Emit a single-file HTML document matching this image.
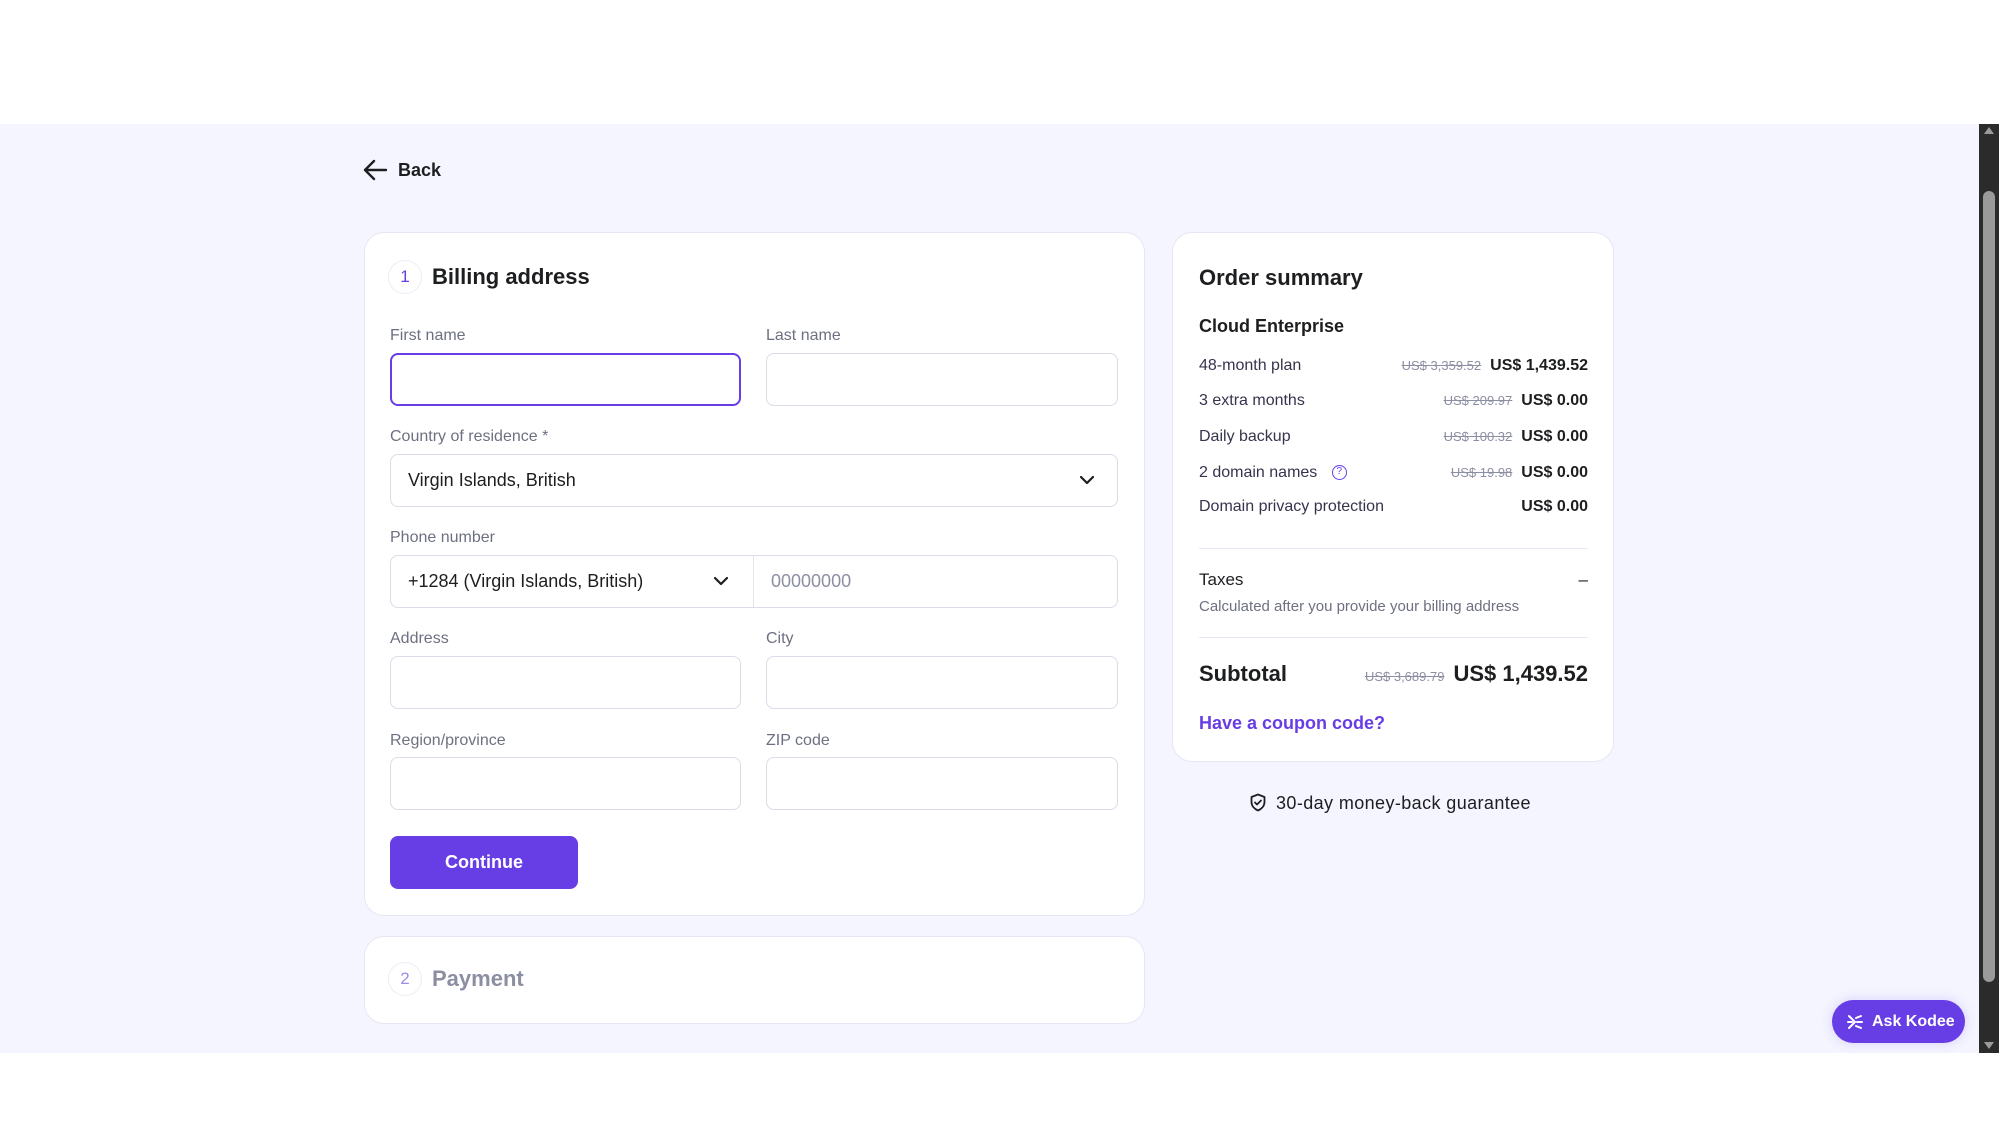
<!DOCTYPE html>
<html><head><meta charset="utf-8"><style>
*{box-sizing:border-box;margin:0;padding:0}
body{width:1999px;height:1125px;position:relative;background:#fff;font-family:"Liberation Sans",sans-serif;color:#2f1c6a;overflow:hidden}
.bg{position:absolute;left:0;top:124px;width:1979px;height:929px;background:#f4f5ff}
.sb{position:absolute;left:1979px;top:124px;width:20px;height:929px;background:#2b2b2b}
.thumb{position:absolute;left:1983px;top:191px;width:12px;height:791px;background:#9a9a9a;border-radius:6px}
.a{position:absolute}
.card{position:absolute;background:#fff;border:1px solid #e6e7f2;border-radius:20px}
.lbl{position:absolute;font-size:16px;color:#6d7081}
.inp{position:absolute;background:#fff;border:1px solid #dadce8;border-radius:8px;height:53px}
.txt{font-size:18px;color:#1d1e20}
.row{position:absolute;left:1199px;width:389px;font-size:16px;color:#36344d;display:flex;justify-content:space-between;align-items:center}
.old{color:#8c8fa3;text-decoration:line-through;font-size:13px;margin-right:9px}
.new{font-weight:bold;color:#1d1e20}
.circ{position:absolute;width:34px;height:34px;border-radius:50%;border:1px solid #ececf5;display:flex;align-items:center;justify-content:center;font-size:17px;color:#673de6}
</style></head><body>
<div class="bg"></div>
<div class="sb"></div><div class="thumb"></div>
<div class="a" style="left:1984px;top:127px;width:0;height:0;border-left:5px solid transparent;border-right:5px solid transparent;border-bottom:7px solid #9a9a9a"></div>
<div class="a" style="left:1984px;top:1042px;width:0;height:0;border-left:5px solid transparent;border-right:5px solid transparent;border-top:7px solid #9a9a9a"></div>

<svg class="a" style="left:362px;top:158px" width="26" height="24" viewBox="0 0 26 24"><path d="M24 12H3M12 3L3 12l9 9" fill="none" stroke="#1d1e20" stroke-width="2.4" stroke-linecap="round" stroke-linejoin="round"/></svg>
<div class="a" style="left:398px;top:160px;font-size:18px;font-weight:bold;color:#1d1e20">Back</div>

<div class="card" style="left:364px;top:232px;width:781px;height:684px"></div>
<div class="circ" style="left:388px;top:260px">1</div>
<div class="a" style="left:432px;top:264px;font-size:22px;font-weight:bold;color:#1d1e20">Billing address</div>

<div class="lbl" style="left:390px;top:327px">First name</div>
<div class="lbl" style="left:766px;top:327px">Last name</div>
<div class="inp" style="left:390px;top:353px;width:351px;border:2px solid #673de6"></div>
<div class="inp" style="left:766px;top:353px;width:352px"></div>

<div class="lbl" style="left:390px;top:428px">Country of residence *</div>
<div class="inp" style="left:390px;top:454px;width:728px"><span class="txt a" style="left:17px;top:15px">Virgin Islands, British</span>
<svg class="a" style="left:688px;top:19px" width="16" height="12" viewBox="0 0 16 12"><path d="M2 3l6 6 6-6" fill="none" stroke="#1d1e20" stroke-width="2.2" stroke-linecap="round" stroke-linejoin="round"/></svg></div>

<div class="lbl" style="left:390px;top:529px">Phone number</div>
<div class="inp" style="left:390px;top:555px;width:728px"><span class="txt a" style="left:17px;top:15px">+1284 (Virgin Islands, British)</span>
<svg class="a" style="left:322px;top:19px" width="16" height="12" viewBox="0 0 16 12"><path d="M2 3l6 6 6-6" fill="none" stroke="#1d1e20" stroke-width="2.2" stroke-linecap="round" stroke-linejoin="round"/></svg>
<div class="a" style="left:362px;top:0;width:1px;height:51px;background:#e2e3ee"></div>
<span class="a" style="left:380px;top:15px;font-size:18px;color:#8c8fa3">00000000</span></div>

<div class="lbl" style="left:390px;top:630px">Address</div>
<div class="lbl" style="left:766px;top:630px">City</div>
<div class="inp" style="left:390px;top:656px;width:351px"></div>
<div class="inp" style="left:766px;top:656px;width:352px"></div>

<div class="lbl" style="left:390px;top:732px">Region/province</div>
<div class="lbl" style="left:766px;top:732px">ZIP code</div>
<div class="inp" style="left:390px;top:757px;width:351px"></div>
<div class="inp" style="left:766px;top:757px;width:352px"></div>

<div class="a" style="left:390px;top:836px;width:188px;height:53px;background:#673de6;border-radius:8px;color:#fff;font-weight:bold;font-size:18px;display:flex;align-items:center;justify-content:center">Continue</div>

<div class="card" style="left:364px;top:936px;width:781px;height:88px"></div>
<div class="circ" style="left:388px;top:962px;color:#a08ce8">2</div>
<div class="a" style="left:432px;top:966px;font-size:22px;font-weight:bold;color:#8c8fa3">Payment</div>

<div class="card" style="left:1172px;top:232px;width:442px;height:530px"></div>
<div class="a" style="left:1199px;top:265px;font-size:22px;font-weight:bold;color:#1d1e20">Order summary</div>
<div class="a" style="left:1199px;top:316px;font-size:18px;font-weight:bold;color:#1d1e20">Cloud Enterprise</div>
<div class="row" style="top:357px"><span>48-month plan</span><span><span class="old">US$ 3,359.52</span><span class="new">US$ 1,439.52</span></span></div>
<div class="row" style="top:392px"><span>3 extra months</span><span><span class="old">US$ 209.97</span><span class="new">US$ 0.00</span></span></div>
<div class="row" style="top:428px"><span>Daily backup</span><span><span class="old">US$ 100.32</span><span class="new">US$ 0.00</span></span></div>
<div class="row" style="top:464px"><span>2 domain names <span style="display:inline-block;width:15px;height:15px;border:1.6px solid #673de6;border-radius:50%;color:#673de6;font-size:10px;text-align:center;line-height:12px;margin-left:10px;vertical-align:middle">?</span></span><span><span class="old">US$ 19.98</span><span class="new">US$ 0.00</span></span></div>
<div class="row" style="top:498px"><span>Domain privacy protection</span><span class="new">US$ 0.00</span></div>
<div class="a" style="left:1199px;top:548px;width:389px;height:1px;background:#e6e7f2"></div>
<div class="row" style="top:570px;font-size:17px;color:#1d1e20"><span>Taxes</span><span>–</span></div>
<div class="a" style="left:1199px;top:598px;font-size:15px;color:#6d7081">Calculated after you provide your billing address</div>
<div class="a" style="left:1199px;top:637px;width:389px;height:1px;background:#e6e7f2"></div>
<div class="row" style="top:661px"><span style="font-size:22px;font-weight:bold;color:#1d1e20">Subtotal</span><span><span class="old">US$ 3,689.79</span><span style="font-size:22px;font-weight:bold;color:#1d1e20">US$ 1,439.52</span></span></div>
<div class="a" style="left:1199px;top:713px;font-size:18px;font-weight:bold;color:#673de6">Have a coupon code?</div>

<svg class="a" style="left:1249px;top:793px" width="18" height="19" viewBox="0 0 18 19"><path d="M9 1.5L2.5 4v5c0 4 3 7 6.5 8.5 3.5-1.5 6.5-4.5 6.5-8.5V4z" fill="none" stroke="#1d1e20" stroke-width="1.8" stroke-linejoin="round"/><path d="M6 9.5l2 2 4-4" fill="none" stroke="#1d1e20" stroke-width="1.8" stroke-linecap="round" stroke-linejoin="round"/></svg>
<div class="a" style="left:1276px;top:793px;font-size:18px;color:#1d1e20;letter-spacing:0.4px">30-day money-back guarantee</div>

<div class="a" style="left:1832px;top:1000px;width:133px;height:43px;background:#673de6;border-radius:22px;box-shadow:0 0 12px rgba(103,61,230,.2);color:#fff;font-weight:bold;font-size:16px;display:flex;align-items:center;padding-left:14px">
<svg width="18" height="16" viewBox="0 0 18 16" style="margin-right:8px"><path d="M3 2l6 6-6 6M2 8h4M10 4l5-2M10 12l5 2M11 8h5" fill="none" stroke="#fff" stroke-width="2" stroke-linecap="round"/></svg>Ask Kodee</div>
</body></html>
